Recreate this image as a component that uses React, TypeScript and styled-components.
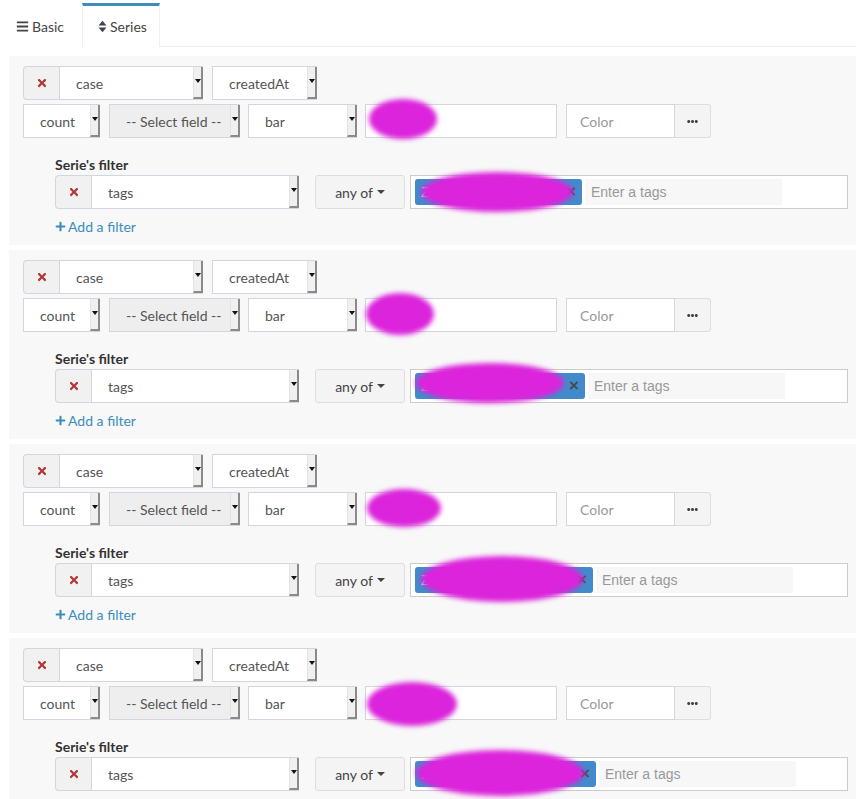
import React from "react";
import styled, { createGlobalStyle } from "styled-components";
import { FaBars, FaTimes, FaPlus, FaEllipsisH } from "react-icons/fa";

const GlobalStyle = createGlobalStyle`
  html, body {
    margin: 0;
    padding: 0;
    background: #fff;
    overflow: hidden;
    font-family: "Source Sans Pro", Lato, "Open Sans", sans-serif;
    font-size: 14px;
    color: #333;
  }
  * { box-sizing: border-box; }
`;

interface Blur {
  left: number;
  top: number;
  w: number;
  h: number;
}

interface Serie {
  chip: number;
  inputBlob: Blur;
  tagBlob: Blur;
}

const series: Serie[] = [
  { chip: 167, inputBlob: { left: 3, top: -6, w: 68, h: 40 }, tagBlob: { left: 10, top: -4, w: 152, h: 40 } },
  { chip: 170, inputBlob: { left: 0, top: -6, w: 68, h: 42 }, tagBlob: { left: 5, top: -7, w: 148, h: 40 } },
  { chip: 178, inputBlob: { left: 1, top: -4, w: 74, h: 38 }, tagBlob: { left: 10, top: -8, w: 162, h: 46 } },
  { chip: 181, inputBlob: { left: 1, top: -5, w: 90, h: 44 }, tagBlob: { left: 5, top: -8, w: 168, h: 46 } },
];

const SortIcon = () => (
  <svg width="9" height="13" viewBox="0 0 9 13">
    <path d="M0.5 5.5 L4.5 0.8 L8.5 5.5 Z" fill="#444" />
    <path d="M0.5 7.5 L8.5 7.5 L4.5 12.2 Z" fill="#444" />
  </svg>
);

const App = () => {
  return (
    <>
      <GlobalStyle />
      <TabBar>
        <Tab>
          <FaBars size={13} />
          Basic
        </Tab>
        <Tab $active>
          <SortIcon />
          Series
        </Tab>
      </TabBar>
      <Content>
        {series.map((s, i) => (
          <SerieBlock key={i}>
            <Row>
              <Group>
                <Addon>
                  <FaTimes size={12} />
                </Addon>
                <Select $w={144}>
                  <SelectText>case</SelectText>
                  <Arrow />
                </Select>
              </Group>
              <Select $w={105}>
                <SelectText>createdAt</SelectText>
                <Arrow />
              </Select>
            </Row>
            <Row $top={4}>
              <Select $w={77}>
                <SelectText>count</SelectText>
                <Arrow />
              </Select>
              <Select $w={131} $disabled>
                <SelectText>-- Select field --</SelectText>
                <Arrow />
              </Select>
              <Select $w={109} $ml={-1}>
                <SelectText>bar</SelectText>
                <Arrow />
              </Select>
              <TextBox $w={192} $ml={-1}>
                <Blob style={{ left: s.inputBlob.left, top: s.inputBlob.top, width: s.inputBlob.w, height: s.inputBlob.h }} />
              </TextBox>
              <Group>
                <TextBox $w={109}>
                  <Placeholder>Color</Placeholder>
                </TextBox>
                <DotsButton>
                  <FaEllipsisH size={11} />
                </DotsButton>
              </Group>
            </Row>
            <Filters>
              <FilterLabel>Serie's filter</FilterLabel>
              <Row>
                <Group>
                  <Addon>
                    <FaTimes size={12} />
                  </Addon>
                  <Select $w={208}>
                    <SelectText>tags</SelectText>
                    <Arrow />
                  </Select>
                </Group>
                <OperatorButton>
                  any of <Caret />
                </OperatorButton>
                <TagsBox>
                  <Chip style={{ width: s.chip }}>
                    <ChipText>Z</ChipText>
                    <ChipRemove>×</ChipRemove>
                  </Chip>
                  <TagInput>Enter a tags</TagInput>
                  <Blob style={{ left: s.tagBlob.left, top: s.tagBlob.top, width: s.tagBlob.w, height: s.tagBlob.h }} />
                </TagsBox>
              </Row>
              <AddFilter>
                <FaPlus size={11} />
                Add a filter
              </AddFilter>
            </Filters>
          </SerieBlock>
        ))}
      </Content>
    </>
  );
};

const TabBar = styled.div`
  display: flex;
  height: 47px;
  border-bottom: 1px solid #f0f0f0;
`;
const Tab = styled.div<{ $active?: boolean }>`
  display: flex;
  align-items: center;
  gap: 3px;
  margin-top: 3px;
  padding: 0 ${({ $active }) => ($active ? "12px" : "17px")} 0 15px;
  font-size: 14px;
  color: #444;
  background: #fff;
  border-top: 3px solid ${({ $active }) => ($active ? "#3c8dbc" : "transparent")};
  border-left: 1px solid ${({ $active }) => ($active ? "#f0f0f0" : "transparent")};
  border-right: 1px solid ${({ $active }) => ($active ? "#f0f0f0" : "transparent")};
  margin-bottom: -1px;
  svg {
    flex-shrink: 0;
    color: #444;
  }
`;
const Content = styled.div`
  display: flex;
  flex-direction: column;
  gap: 5px;
  padding: 9px 0 0 9px;
`;
const SerieBlock = styled.div`
  background: #f8f8f8;
  padding: 10px 14px 10px 14px;
  height: 189px;
`;
const Row = styled.div<{ $top?: number }>`
  display: flex;
  align-items: center;
  gap: 9px;
  margin-top: ${({ $top }) => $top ?? 0}px;
  & > * {
    flex-shrink: 0;
  }
`;
const Group = styled.div`
  display: flex;
`;
const Addon = styled.div`
  width: 36px;
  height: 34px;
  display: flex;
  align-items: center;
  justify-content: center;
  background: #f1f1f1;
  border: 1px solid #d2d6de;
  border-right: none;
  border-radius: 4px 0 0 4px;
  color: #b03a37;
`;
const Select = styled.div<{ $w: number; $disabled?: boolean; $ml?: number }>`
  width: ${({ $w }) => $w}px;
  height: 34px;
  margin-left: ${({ $ml }) => $ml ?? 0}px;
  display: flex;
  align-items: stretch;
  background: ${({ $disabled }) => ($disabled ? "#eeeeee" : "#fff")};
  border: 1px solid #d2d6de;
  border-right: none;
  font-size: 14px;
  color: #555;
`;
const SelectText = styled.span`
  flex: 1;
  display: flex;
  align-items: center;
  padding-left: 16px;
  white-space: nowrap;
  overflow: hidden;
`;
const Arrow = styled.span`
  position: relative;
  width: 10px;
  background: #f0f0f0;
  border-left: 1px solid #e3e3e3;
  border-right: 2px solid #8a8a8a;
  border-bottom: 2px solid #8a8a8a;
  &::after {
    content: "";
    position: absolute;
    left: 1px;
    top: 12px;
    border-left: 3px solid transparent;
    border-right: 3px solid transparent;
    border-top: 4px solid #111;
  }
`;
const TextBox = styled.div<{ $w: number; $ml?: number }>`
  position: relative;
  width: ${({ $w }) => $w}px;
  height: 34px;
  margin-left: ${({ $ml }) => $ml ?? 0}px;
  background: #fff;
  border: 1px solid #d2d6de;
  display: flex;
  align-items: center;
  padding-left: 13px;
`;
const Placeholder = styled.span`
  color: #999;
  font-size: 14px;
`;
const DotsButton = styled.div`
  width: 36px;
  height: 34px;
  display: flex;
  align-items: center;
  justify-content: center;
  background: #f4f4f4;
  border: 1px solid #ddd;
  border-left: none;
  border-radius: 0 3px 3px 0;
  color: #444;
`;
const Blob = styled.span`
  position: absolute;
  background: #db24db;
  border-radius: 50%;
  filter: blur(2.5px);
  pointer-events: none;
`;
const Filters = styled.div`
  margin: 18px 0 0 32px;
`;
const FilterLabel = styled.div`
  font-weight: 700;
  font-size: 14px;
  color: #333;
  line-height: 17px;
  margin-bottom: 2px;
`;
const OperatorButton = styled.div`
  width: 90px;
  height: 34px;
  margin-left: 7px;
  display: flex;
  align-items: center;
  justify-content: center;
  gap: 4px;
  background: #f4f4f4;
  border: 1px solid #ddd;
  border-radius: 3px;
  color: #444;
  font-size: 14px;
`;
const Caret = styled.span`
  display: inline-block;
  border-left: 4px solid transparent;
  border-right: 4px solid transparent;
  border-top: 4px solid #444;
`;
const TagsBox = styled.div`
  position: relative;
  width: 438px;
  height: 34px;
  margin-left: -4px;
  background: #fff;
  border: 1px solid #ccc;
  display: flex;
  align-items: center;
  padding-left: 4px;
  gap: 3px;
`;
const Chip = styled.div`
  height: 26px;
  display: flex;
  align-items: center;
  justify-content: space-between;
  padding: 0 6px 0 6px;
  background: #428bca;
  border-radius: 3px;
  color: #fff;
  font-family: "Liberation Sans", Arial, sans-serif;
  font-size: 14px;
`;
const ChipText = styled.span`
  opacity: 0.75;
`;
const ChipRemove = styled.span`
  color: #4a4a4a;
  font-weight: 700;
  font-size: 17px;
`;
const TagInput = styled.div`
  width: 197px;
  height: 26px;
  display: flex;
  align-items: center;
  padding-left: 6px;
  background: #f7f7f7;
  color: #999;
  font-family: "Liberation Sans", Arial, sans-serif;
  font-size: 14px;
`;
const AddFilter = styled.div`
  display: flex;
  align-items: center;
  gap: 2px;
  margin-top: 9px;
  color: #3c8dbc;
  font-size: 14px;
  svg {
    color: #3c8dbc;
  }
`;

export default App;
